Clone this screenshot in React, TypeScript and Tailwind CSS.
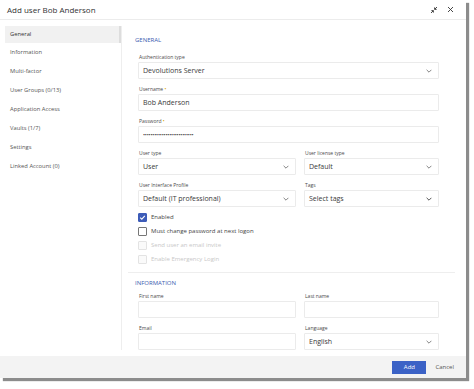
import React from "react";

const Chevron = ({ dark = false }: { dark?: boolean }) => (
  <svg width="6" height="4" viewBox="0 0 6 4" className="shrink-0">
    <path d="M0.6 0.8 L3 3.2 L5.4 0.8" fill="none" stroke={dark ? "#444" : "#777"} strokeWidth="0.9" />
  </svg>
);

const Label = ({ text, req = false }: { text: string; req?: boolean }) => (
  <div className="text-[5px] text-[#4a4a4a] leading-none h-[5px] mb-[2px] pl-[1px]">
    {text}
    {req && <span className="text-[#e0a800]"> •</span>}
  </div>
);

const Box = ({ children, select = false, dark = false }: { children?: React.ReactNode; select?: boolean; dark?: boolean }) => (
  <div className="h-[17px] border border-[#ebebeb] rounded-[1px] bg-white flex items-center pl-[4px] pr-[6px] text-[7px] text-[#3a3a3a] leading-none">
    <div className="flex-1">{children}</div>
    {select && <Chevron dark={dark} />}
  </div>
);

const Check = ({ checked = false, disabled = false, text }: { checked?: boolean; disabled?: boolean; text: string }) => (
  <div className="flex items-center h-[14px]">
    <div
      className={
        "w-[9px] h-[9px] rounded-[1px] flex items-center justify-center mr-[4px] " +
        (checked
          ? "bg-[#3d5cb8] border border-[#3d5cb8]"
          : disabled
          ? "border border-[#e3e3e3] bg-[#fafafa]"
          : "border border-[#777] bg-white")
      }
    >
      {checked && (
        <svg width="7" height="7" viewBox="0 0 7 7">
          <path d="M1.2 3.6 L2.8 5.1 L5.8 1.8" fill="none" stroke="white" strokeWidth="1.1" />
        </svg>
      )}
    </div>
    <span className={"text-[6px] leading-none " + (disabled ? "text-[#c8c8c8]" : "text-[#444]")}>{text}</span>
  </div>
);

export default function App() {
  const side = [
    "General",
    "Information",
    "Multi-factor",
    "User Groups (0/13)",
    "Application Access",
    "Vaults (1/7)",
    "Settings",
    "Linked Account (0)",
  ];
  return (
    <div className="w-[474px] h-[389px] bg-white" style={{ fontFamily: '"Open Sans", sans-serif' }}>
      <div className="w-[466px] h-[378px] bg-white shadow-[3px_3px_1px_rgba(0,0,0,0.45)] flex flex-col">
        <div className="h-[20px] border-b border-[#ececec] flex items-center pl-[7px] pr-[12px]">
          <div className="flex-1 text-[8px] font-medium text-[#333] leading-none">Add user Bob Anderson</div>
          <svg width="8" height="8" viewBox="0 0 8 8" className="mr-[9px]">
            <path d="M7 1 L4.8 3.2 M4.6 1.4 V3.4 H6.6" fill="none" stroke="#333" strokeWidth="0.9" />
            <path d="M1 7 L3.2 4.8 M1.4 4.6 H3.4 V6.6" fill="none" stroke="#333" strokeWidth="0.9" />
          </svg>
          <svg width="7" height="7" viewBox="0 0 7 7">
            <path d="M1 1 L6 6 M6 1 L1 6" fill="none" stroke="#333" strokeWidth="0.9" />
          </svg>
        </div>
        <div className="flex-1 flex min-h-0">
          <div className="w-[121px] pt-[6px] pl-[5px]">
            {side.map((s, i) => (
              <div
                key={s}
                className={
                  "flex items-center pl-[5px] text-[5.8px] leading-none " +
                  (i === 0 ? "h-[17px] bg-[#f1f1f1] text-[#333] border-r-2 border-[#dddddd]" : "h-[19px] text-[#555]")
                }
              >
                {s}
              </div>
            ))}
          </div>
          <div className="w-[1px] bg-[#eeeeee] mt-[6px] mb-[6px]" />
          <div className="flex-1 pl-[7px] pr-[27px] pt-[17px]">
            <div className="pl-[6px] text-[6px] text-[#3d5cb0] font-medium leading-none mb-[12px]">GENERAL</div>
            <div className="pl-[9px]">
              <Label text="Authentication type" />
              <Box select>Devolutions Server</Box>
              <div className="h-[8px]" />
              <Label text="Username" req />
              <Box>Bob Anderson</Box>
              <div className="h-[8px]" />
              <Label text="Password" req />
              <Box>
                <span className="text-[5.5px] tracking-[-0.2px]">•••••••••••••••••••••••••••</span>
              </Box>
              <div className="h-[8px]" />
              <div className="grid grid-cols-[158px_1fr] gap-x-[8px]">
                <div>
                  <Label text="User type" />
                  <Box select>User</Box>
                </div>
                <div>
                  <Label text="User license type" />
                  <Box select>Default</Box>
                </div>
                <div className="mt-[8px]">
                  <Label text="User Interface Profile" />
                  <Box select>Default (IT professional)</Box>
                </div>
                <div className="mt-[8px]">
                  <Label text="Tags" />
                  <Box select dark>
                    Select tags
                  </Box>
                </div>
              </div>
              <div className="mt-[3px]">
                <Check checked text="Enabled" />
                <Check text="Must change password at next logon" />
                <Check disabled text="Send user an email invite" />
                <Check disabled text="Enable Emergency Login" />
              </div>
            </div>
            <div className="border-t border-[#eeeeee] mt-[6px] ml-[-1px] mr-[-16px]" />
            <div className="pl-[6px] text-[6px] text-[#3d5cb0] font-medium leading-none mt-[7px] mb-[8px]">INFORMATION</div>
            <div className="pl-[9px] grid grid-cols-[158px_1fr] gap-x-[8px]">
              <div>
                <Label text="First name" />
                <Box />
              </div>
              <div>
                <Label text="Last name" />
                <Box />
              </div>
              <div className="mt-[8px]">
                <Label text="Email" />
                <Box />
              </div>
              <div className="mt-[8px]">
                <Label text="Language" />
                <Box select>English</Box>
              </div>
            </div>
          </div>
        </div>
        <div className="h-[22px] bg-[#f3f3f3] flex items-center justify-end pr-[12px]">
          <div className="w-[34px] h-[13px] bg-[#3b62c6] text-white text-[6px] flex items-center justify-center mr-[9px]">Add</div>
          <div className="text-[6px] text-[#555]">Cancel</div>
        </div>
      </div>
    </div>
  );
}
